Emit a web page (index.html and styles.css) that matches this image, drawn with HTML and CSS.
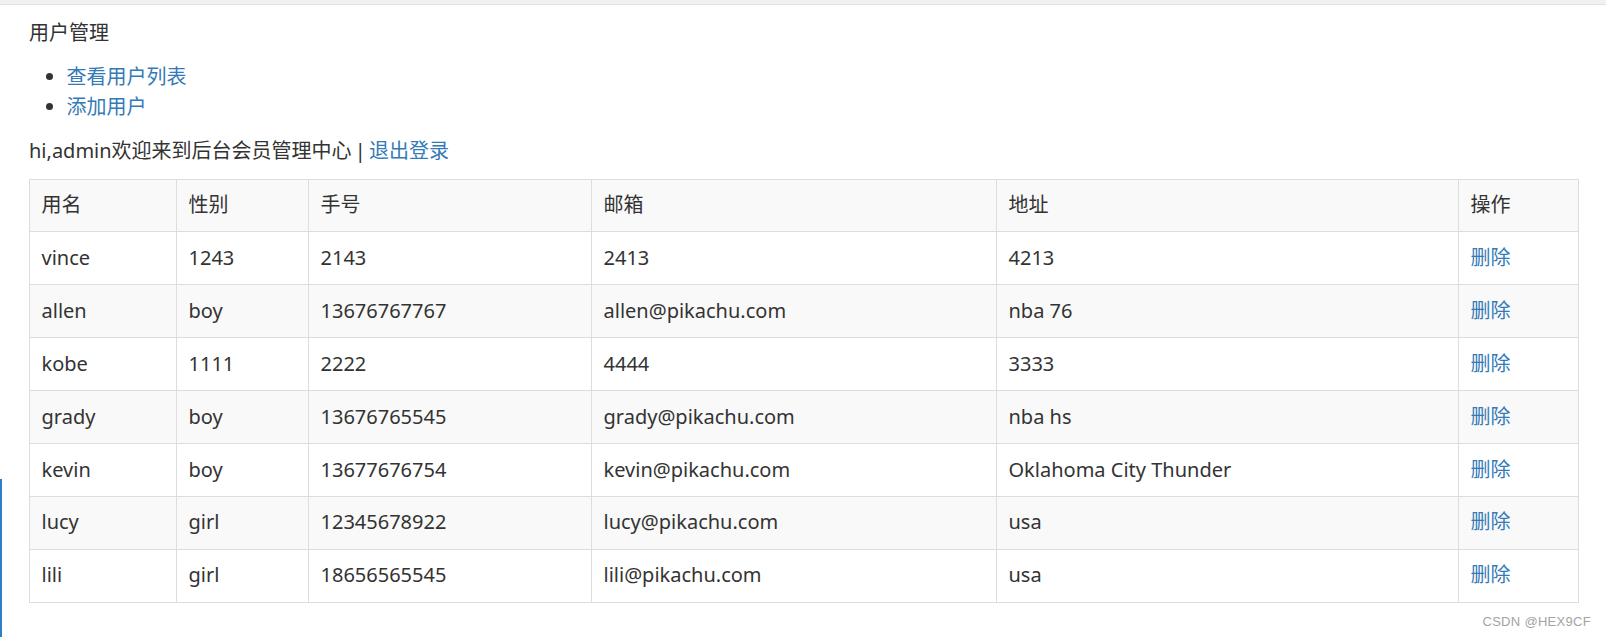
FILE: index.html
```html
<!DOCTYPE html>
<html lang="zh-CN">
<head>
<meta charset="utf-8">
<title>用户管理</title>
<link rel="stylesheet" href="styles.css">
</head>
<body>
<div class="topbar"></div>
<div class="page">
  <p class="title">用户管理</p>
  <ul class="menu">
    <li><a href="#">查看用户列表</a></li>
    <li><a href="#">添加用户</a></li>
  </ul>
  <p class="welcome">hi,admin欢迎来到后台会员管理中心 | <a href="#">退出登录</a></p>
  <table class="users">
    <colgroup>
      <col class="c1"><col class="c2"><col class="c3"><col class="c4"><col class="c5"><col class="c6">
    </colgroup>
    <tbody>
      <tr><td>用名</td><td>性别</td><td>手号</td><td>邮箱</td><td>地址</td><td>操作</td></tr>
      <tr><td>vince</td><td>1243</td><td>2143</td><td>2413</td><td>4213</td><td><a href="#">删除</a></td></tr>
      <tr><td>allen</td><td>boy</td><td>13676767767</td><td>allen@pikachu.com</td><td>nba 76</td><td><a href="#">删除</a></td></tr>
      <tr><td>kobe</td><td>1111</td><td>2222</td><td>4444</td><td>3333</td><td><a href="#">删除</a></td></tr>
      <tr><td>grady</td><td>boy</td><td>13676765545</td><td>grady@pikachu.com</td><td>nba hs</td><td><a href="#">删除</a></td></tr>
      <tr><td>kevin</td><td>boy</td><td>13677676754</td><td>kevin@pikachu.com</td><td>Oklahoma City Thunder</td><td><a href="#">删除</a></td></tr>
      <tr><td>lucy</td><td>girl</td><td>12345678922</td><td>lucy@pikachu.com</td><td>usa</td><td><a href="#">删除</a></td></tr>
      <tr><td>lili</td><td>girl</td><td>18656565545</td><td>lili@pikachu.com</td><td>usa</td><td><a href="#">删除</a></td></tr>
    </tbody>
  </table>
</div>
<div class="edge-line"></div>
<div class="watermark">CSDN @HEX9CF</div>
</body>
</html>
```
FILE: styles.css
```css
html, body {
  margin: 0;
  padding: 0;
  background: #fff;
}
body {
  font-family: "Noto Sans", "Noto Sans CJK SC", sans-serif;
  font-size: 20px;
  color: #333;
  height: 637px;
  overflow: hidden;
  position: relative;
}
a {
  color: #337ab7;
  text-decoration: none;
}
.topbar {
  height: 4px;
  background: #f1f1f1;
  border-bottom: 1px solid #e2e2e2;
}
.page {
  padding: 0 28px 0 29px;
}
.title {
  margin: 13px 0 0;
  line-height: 29px;
}
.menu {
  margin: 15px 0 0;
  padding: 0 0 0 37.5px;
}
.menu li {
  line-height: 29.5px;
}
.welcome {
  margin: 14.5px 0 0;
  line-height: 29px;
  word-spacing: -2px;
}
.users {
  margin-top: 14px;
  width: 1549px;
  table-layout: fixed;
  border-collapse: collapse;
  border: 1px solid #ddd;
}
.users col.c1 { width: 147px; }
.users col.c2 { width: 132px; }
.users col.c3 { width: 283px; }
.users col.c4 { width: 405px; }
.users col.c5 { width: 462px; }
.users col.c6 { width: 120px; }
.users td {
  border: 1px solid #ddd;
  padding: 11.5px 11.5px;
  line-height: 28.9px;
  white-space: nowrap;
}
.users tr:nth-child(odd) {
  background: #f9f9f9;
}
.edge-line {
  position: absolute;
  left: 0;
  top: 479px;
  width: 2px;
  height: 158px;
  background: #2a7fc6;
}
.watermark {
  position: absolute;
  right: 15px;
  top: 614px;
  font-family: "Liberation Sans", Arial, sans-serif;
  font-size: 13px;
  letter-spacing: 0.3px;
  line-height: 16px;
  color: #a3a3a3;
}
```
